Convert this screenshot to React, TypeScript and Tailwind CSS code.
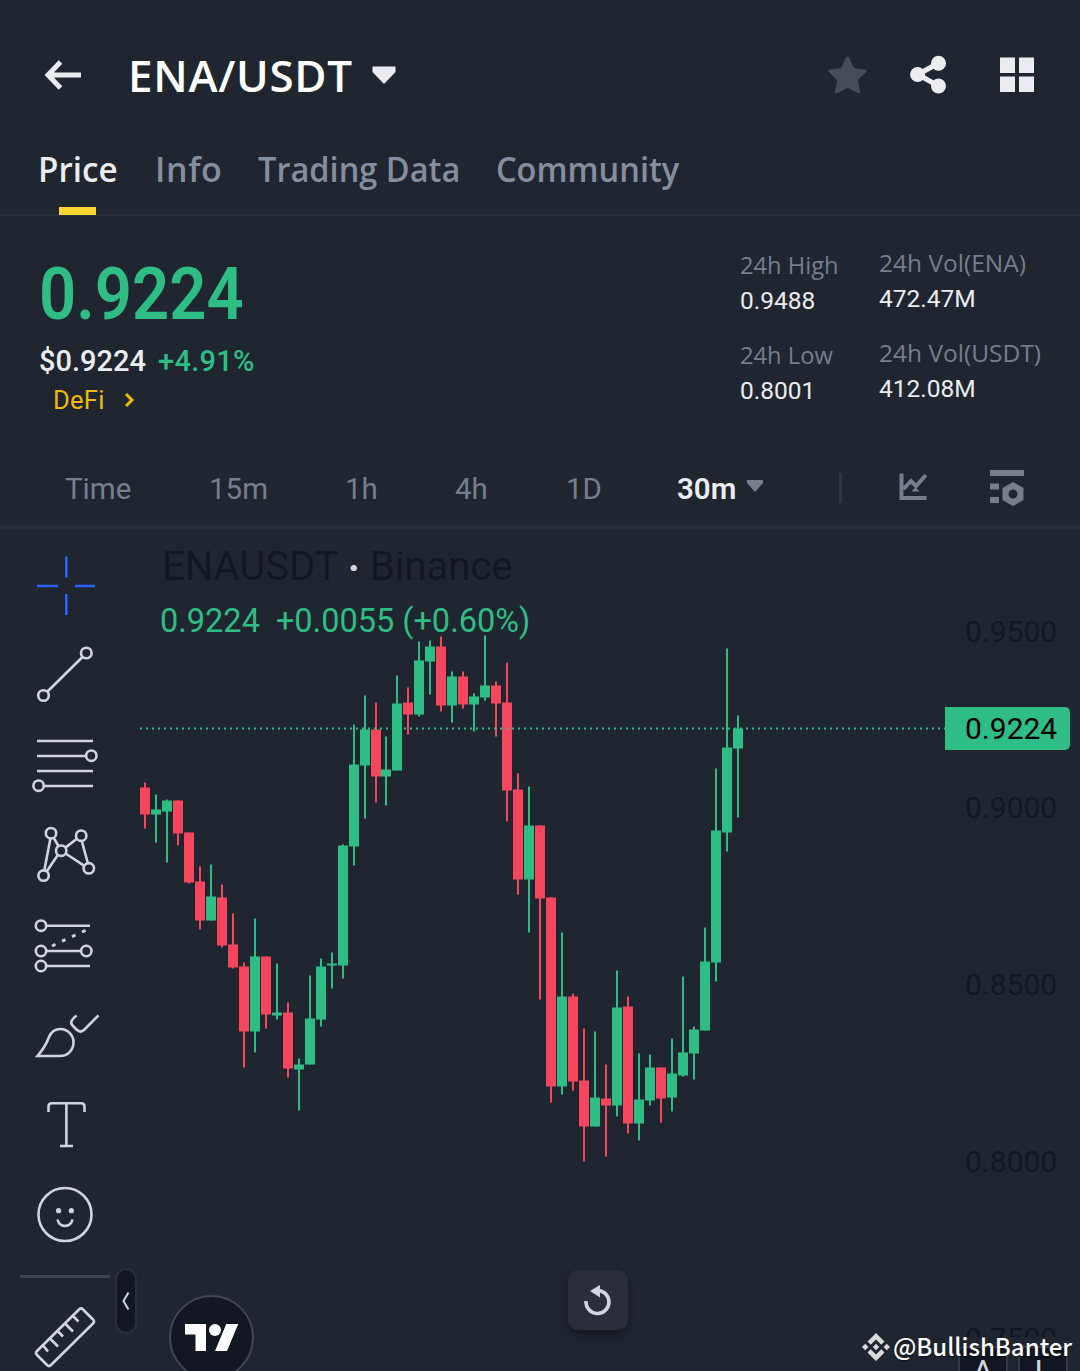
import type { ReactNode } from "react";

type Candle = [up: 0 | 1, high: number, top: number, bottom: number, low: number];

const candles: Candle[] = [
  [0, 782, 787, 815, 829], [1, 794, 809, 815, 843], [1, 799, 800, 812, 863], [0, 800, 800, 834, 846],
  [0, 832, 832, 883, 884], [0, 866, 881, 921, 930], [1, 864, 896, 921, 921], [0, 884, 897, 946, 948],
  [0, 913, 944, 968, 969], [0, 962, 966, 1032, 1068], [1, 918, 956, 1032, 1053], [0, 956, 956, 1015, 1029],
  [1, 963, 1012, 1016, 1020], [0, 1002, 1012, 1069, 1078], [1, 1058, 1064, 1070, 1111], [1, 975, 1018, 1065, 1065],
  [1, 958, 966, 1020, 1027], [1, 952, 963, 966, 989], [1, 844, 845, 966, 979], [1, 724, 764, 847, 866],
  [1, 695, 729, 766, 819], [0, 702, 729, 777, 803], [1, 736, 769, 777, 806], [1, 675, 703, 771, 771],
  [0, 687, 702, 715, 735], [1, 641, 660, 715, 717], [1, 640, 646, 662, 695], [0, 636, 646, 706, 712],
  [1, 671, 676, 706, 723], [0, 671, 676, 705, 709], [1, 693, 696, 705, 732], [1, 635, 685, 698, 701],
  [0, 681, 685, 704, 737], [0, 662, 702, 791, 822], [0, 773, 789, 880, 895], [1, 786, 825, 880, 933],
  [0, 825, 825, 899, 1000], [0, 897, 897, 1087, 1103], [1, 932, 996, 1087, 1095], [0, 993, 996, 1082, 1091],
  [0, 1028, 1080, 1127, 1162], [1, 1031, 1097, 1127, 1127], [0, 1064, 1098, 1106, 1157], [1, 970, 1007, 1106, 1117],
  [0, 996, 1006, 1124, 1134], [1, 1053, 1099, 1124, 1141], [1, 1054, 1067, 1101, 1106], [0, 1067, 1067, 1099, 1123],
  [1, 1038, 1073, 1098, 1112], [1, 976, 1052, 1076, 1077], [1, 1026, 1029, 1054, 1080], [1, 927, 961, 1031, 1031],
  [1, 768, 830, 963, 982], [1, 648, 747, 833, 852], [1, 715, 728, 749, 818],
];

function CandleChart() {
  return (
    <svg className="block h-[660px] w-[805px]" viewBox="140 530 805 660">
      {candles.map(([up, high, top, bottom, low], i) => {
        const x = 140 + i * 11 - (i >= 22 ? 1 : 0);
        return (
          <g key={i} fill={up ? "#2ebd85" : "#f6465d"}>
            <rect x={x + 4} y={high + 0.5} width={2} height={low - high - 1} />
            <rect x={x} y={top + 0.5} width={10} height={bottom - top - 1} />
          </g>
        );
      })}
      <path d="M140 728.6H945" stroke="#2ebd85" strokeWidth={2} strokeDasharray="2 4" />
    </svg>
  );
}

function Tool({ y, children }: { y: number; children: ReactNode }) {
  return (
    <button className="block h-[90px] w-[130px] shrink-0">
      <svg className="block h-[90px] w-[130px]" viewBox={`0 ${y} 130 90`} fill="none" stroke="#d1d4dc" strokeWidth={2.6}>
        {children}
      </svg>
    </button>
  );
}

function Toolbar() {
  return (
    <div className="flex w-[140px] shrink-0 flex-col pt-[11px]">
      <Tool y={540}>
        <path stroke="#2962ff" strokeWidth={2.6} d="M66.3 556.5v21M66.3 594v21M37 586h21M75 586h20" />
      </Tool>
      <Tool y={630}>
        <path d="M47.5 691.5 82.5 657" />
        <circle cx="86.3" cy="653" r="5.3" />
        <circle cx="43.5" cy="695.5" r="5.3" />
      </Tool>
      <Tool y={720}>
        <path d="M37 741h56M37 756h49M37 771h56M44 786h49" />
        <circle cx="91.3" cy="755.7" r="5.2" />
        <circle cx="38.6" cy="785.7" r="5.2" />
      </Tool>
      <Tool y={810}>
        <path d="M50.4 838.5 44.3 870.4M53.8 838 58.4 846M65.4 847.6 76.6 839M57.8 855 46.7 871.4M65.6 853.5 84 865.6M81.8 841 87.8 863" />
        <circle cx="51" cy="833.2" r="5.2" />
        <circle cx="81.2" cy="835.7" r="5.2" />
        <circle cx="61.2" cy="850.7" r="5.2" />
        <circle cx="43.6" cy="875.6" r="5.2" />
        <circle cx="88.8" cy="868.3" r="5.2" />
      </Tool>
      <Tool y={900}>
        <path d="M47 925.7h43M47 951h34M47 966h43" />
        <path strokeWidth={3} d="m52 946 3.5-1.6M62 941.2l3.5-1.6M72 936.6l3.5-1.6M82 932l3.5-1.6" />
        <circle cx="41" cy="925.7" r="5.2" />
        <circle cx="41" cy="951" r="5.2" />
        <circle cx="86.3" cy="951" r="5.2" />
        <circle cx="41" cy="966" r="5.2" />
      </Tool>
      <Tool y={990}>
        <path d="M37.5 1056H60c7.6 0 13.5-6 13.5-13.5S67.5 1029 60.5 1029c-6 0-9.500 3.200-11.500 8-2.600 7.500-6 12.500-11.500 19z" />
        <path d="m76.500 1015.300-3.500 3.500c-2.600 2.600-2.600 4.600 0 7.200l3.500 3.500c2.600 2.600 5.400 2.600 8 0l14-14.200" />
      </Tool>
      <Tool y={1080}>
        <path d="M48.500 1112v-5.500q0-3.300 3.300-3.300h29.400q3.300 0 3.300 3.300v5.500M66.400 1103v43M60 1146h13" />
      </Tool>
      <Tool y={1170}>
        <circle cx="65" cy="1214.500" r="26.500" />
        <circle cx="58.600" cy="1210.700" r="2.600" fill="#d1d4dc" stroke="none" />
        <circle cx="71.300" cy="1210.700" r="2.600" fill="#d1d4dc" stroke="none" />
        <path d="M57.500 1219.500c2 8.500 13 8.500 15 0" />
      </Tool>
      <div className="mt-[15px] ml-5 h-[3px] w-[90px] shrink-0 bg-[#3f434d]" />
      <Tool y={1278}>
        <path d="M79 1309.500q2-2 4 0l10 10q2 2 0 4l-42 41.500q-2 2-4 0l-10-10q-2-2 0-4zM43.500 1346l4.500 5.500M50 1338.500l8 8M57.500 1331l5.500 5.500M65 1323.500l8 8M73 1316l5.500 5.500" />
      </Tool>
    </div>
  );
}

function Stat({ label, value }: { label: string; value: string }) {
  return (
    <div className="h-[90px] whitespace-nowrap">
      <div className="h-[36px] font-['Open_Sans'] leading-[30px] text-[#767e8c]">{label}</div>
      <div className="text-[24.5px] leading-[30px] text-[#eaecef]">{value}</div>
    </div>
  );
}

export default function App() {
  return (
    <div className="relative h-[1371px] w-[1080px] overflow-hidden bg-[#202630] font-[Roboto,sans-serif]">
      <header className="flex h-[150px] items-center">
        <svg className="ml-[44px] h-8 w-[38px]" viewBox="44 59 38 32" fill="none" stroke="#eaecef" strokeWidth={5}>
          <path d="M81 75H48M60.500 62 48 75l12.500 13" />
        </svg>
        <h1 className="ml-[46px] w-[244px] font-['Open_Sans'] text-[44px] leading-[54px] font-semibold tracking-[0.7px] whitespace-nowrap text-white">ENA/USDT</h1>
        <svg className="h-[18px] w-6" viewBox="372 65 24 18">
          <path d="M372.500 65.500h23V71l-11.500 12-11.500-12z" fill="#eaecef" />
        </svg>
        <svg className="ml-[432px] h-10 w-10" viewBox="828 55 40 40">
          <path d="m847.500 58 5.500 11.500 12 1.500-8.700 8.600 2.200 12.400-11-6-11 6 2.200-12.400L830 71l12-1.500z" fill="#474d57" stroke="#474d57" strokeWidth={3} strokeLinejoin="round" />
        </svg>
        <svg className="ml-[41px] h-10 w-[38px]" viewBox="909 55 38 40" fill="#eaecef">
          <path d="m918 74.500 20.500-11.500M918 74.500 938.500 86" stroke="#eaecef" strokeWidth={5} />
          <circle cx="917.600" cy="74.500" r="7.500" />
          <circle cx="938.500" cy="63.200" r="7.500" />
          <circle cx="938.500" cy="86" r="7.500" />
        </svg>
        <svg className="ml-[53px] h-9 w-[34px]" viewBox="1000 57 34 36" fill="#eaecef">
          <path d="M1000 57.500h15V73h-15zM1019 57.500h15V73h-15zM1000 76.500h15V92h-15zM1019 76.500h15V92h-15z" />
        </svg>
      </header>

      <nav className="flex h-[66px] border-b-2 border-[#2b313a] pl-[38px] font-['Open_Sans'] text-[34px] leading-[39px] font-semibold whitespace-nowrap text-[#848e9c]">
        <div className="flex w-[117px] flex-col text-[#eaecef]">
          <span className="origin-left scale-x-[0.975]">Price</span>
          <span className="mt-[18px] ml-[21px] h-2 w-[37px] shrink-0 bg-[#fcd535]" />
        </div>
        <span className="w-[103px] tracking-[0.6px]">Info</span>
        <span className="w-[238px] origin-left scale-x-[0.957]">Trading Data</span>
        <span className="origin-left scale-x-[0.957]">Community</span>
      </nav>

      <section className="flex h-[234px] whitespace-nowrap">
        <div className="w-[740px] pl-[39px]">
          <div className="mt-[39px] h-[80px] origin-left scale-x-[0.905] text-[72px] leading-[80px] font-semibold text-[#2ebd85]">0.9224</div>
          <div className="mt-[10px] flex h-[32px] gap-[13px] text-[29px] leading-[32px] font-medium">
            <span className="w-[106px]  text-[#eaecef]">$0.9224</span>
            <span className="tracking-[0.3px] text-[#2ebd85]">+4.91%</span>
          </div>
          <div className="mt-[7px] flex h-[32px] items-center pl-[14px] text-[25.500px] tracking-[0.300px] text-[#f0b90b]">
            DeFi
            <svg className="ml-[19px] h-4 w-3" viewBox="0 0 12 16" fill="none" stroke="#f0b90b" strokeWidth={3}>
              <path d="m2 2 6 6-6 6" />
            </svg>
          </div>
        </div>
        <div className="w-[139px] pt-[34px] text-[23.700px]">
          <Stat label="24h High" value="0.9488" />
          <Stat label="24h Low" value="0.8001" />
        </div>
        <div className="pt-[32px] text-[24.500px]">
          <Stat label="24h Vol(ENA)" value="472.47M" />
          <Stat label="24h Vol(USDT)" value="412.08M" />
        </div>
      </section>

      <div className="flex h-[79px] items-center border-b-4 border-[#272d37] pt-[3px] pl-[65px] text-[29.500px] whitespace-nowrap text-[#767e8c]">
        <span className="w-[144px]">Time</span>
        <span className="w-[136px]">15m</span>
        <span className="w-[110px]">1h</span>
        <span className="w-[111px]">4h</span>
        <span className="w-[111px]">1D</span>
        <span className="w-[70px] font-semibold text-[#eaecef]">30m</span>
        <svg className="mb-[6px] h-3 w-4" viewBox="0 0 16 12">
          <path d="M0 0h16v3L8 12 0 3z" fill="#767e8c" />
        </svg>
        <span className="mb-[3px] ml-[76px] h-[30px] w-[3px] bg-[#2f3640]" />
        <svg className="mb-[5px] ml-[57px] h-7 w-7" viewBox="899 473 28 28" fill="none" stroke="#767e8c" strokeWidth={4}>
          <path d="M901.500 473.500v24.500h25M903.500 489l7.500-8 5 5 10-11" />
          <path d="m915.500 487 4 4.500h-8z" fill="#767e8c" stroke="none" />
        </svg>
        <svg className="mb-[2px] ml-[62px] h-9 w-[36px]" viewBox="989 470 36 36" fill="#767e8c">
          <path d="M990 470h34v6h-34zM990 483.500h9v6h-9zM990 497h9v6h-9z" />
          <path fillRule="evenodd" d="m1013 482 10.500 6v12l-10.500 6-10.500-6v-12zm0 7.500a4.500 4.500 0 1 0 0 9 4.500 4.500 0 0 0 0-9z" />
        </svg>
      </div>

      <main className="relative flex h-[842px]">
        <Toolbar />
        <div className="relative w-[805px] pt-[1px]">
          <CandleChart />
          <div className="absolute top-[12px] left-[22px] text-[40px] leading-[51px] whitespace-nowrap text-[#131722]">
            ENAUSDT <span className="relative top-[2px] font-bold text-[#d1d4dc]">·</span> Binance
          </div>
          <div className="absolute top-[72px] left-[20px] flex gap-[16px] text-[32.500px] leading-[40px] whitespace-nowrap text-[#2ebd85]">
            <span>0.9224</span>
            <span>+0.0055 (+0.60%)</span>
          </div>
        </div>

        <div className="flex w-[135px] flex-col text-[30px] leading-[44px] text-[#131722]">
          <span className="mt-[81px] pl-[20px]">0.9500</span>
          <span className="mt-[53px] h-[43px] w-[125px] rounded-r-[5px] bg-[#2ebd85] pl-[20px] text-black">0.9224</span>
          <span className="mt-[36px] pl-[20px]">0.9000</span>
          <span className="mt-[133px] pl-[20px]">0.8500</span>
          <span className="mt-[133px] pl-[20px]">0.8000</span>
          <span className="mt-[133px] h-[20px] overflow-hidden pl-[20px]">0.7500</span>
        </div>

        <button className="absolute top-[739px] left-[115px] flex h-[66px] w-[22px] items-center justify-center rounded-full border-2 border-[#2a2e39] bg-[#131722]">
          <svg className="h-5 w-2" viewBox="0 0 8 20" fill="none" stroke="#d1d4dc" strokeWidth={2}>
            <path d="M6.500 1.500 1.500 10l5 8.500" />
          </svg>
        </button>
        <div className="absolute top-[766px] left-[169px] flex h-[85px] w-[85px] items-center justify-center rounded-full border-2 border-[#434651] bg-[#131722]">
          <svg className="h-[27px] w-[54px]" viewBox="0 4 36 18" fill="white">
            <path d="M14 22H7V11H0V4h14v18zM28 22h-8l7.500-18h8L28 22z" />
            <circle cx="20" cy="8" r="4" />
          </svg>
        </div>
        <button className="absolute top-[741px] left-[568px] h-[60px] w-[60px] rounded-[10px] bg-[#2a2e39] shadow-[0_4px_10px_rgba(0,0,0,0.400)]">
          <svg className="block h-[60px] w-[60px]" viewBox="568 1270 60 60" fill="none" stroke="#d1d4dc" strokeWidth={3.600}>
            <path d="M586 1301a11.500 11.500 0 1 0 12-10.500" />
            <path d="m600 1285-10 6 10 6.500z" fill="#d1d4dc" stroke="none" />
          </svg>
        </button>
        <div className="absolute top-[817px] left-[958px] flex gap-[10px] text-[32px] leading-[42px] text-[#d1d4dc]">
          <div className="h-[40px] w-[50px] rounded-[6px] border-2 border-[#363a45] bg-[#131722] pt-[2px] text-center">A</div>
          <div className="h-[40px] w-[50px] rounded-[6px] border-2 border-[#363a45] bg-[#131722] pt-[2px] text-center">L</div>
        </div>
        <div className="absolute top-[799px] left-[862px] flex h-[38px] items-center text-white [text-shadow:0_1px_2px_rgba(0,0,0,0.600)]">
          <svg className="h-7 w-7" viewBox="0 0 28 28" fill="#d9dadb">
            <path d="m14 0 8.500 8.500-3.200 3.200L14 6.400l-5.300 5.300-3.200-3.200zM14 28l8.500-8.500-3.200-3.200L14 21.600l-5.300-5.300-3.200 3.200zM3.200 10.800 6.400 14l-3.200 3.200L0 14zM24.800 10.800 28 14l-3.200 3.200-3.200-3.200zM14 10.800l3.200 3.200-3.200 3.200-3.200-3.200z" />
          </svg>
          <span className="mb-[3px] ml-[3px] font-['Noto_Sans_CJK_SC',sans-serif] text-[24px] leading-[38px] font-medium whitespace-nowrap">@BullishBanter</span>
        </div>
      </main>
    </div>
  );
}
